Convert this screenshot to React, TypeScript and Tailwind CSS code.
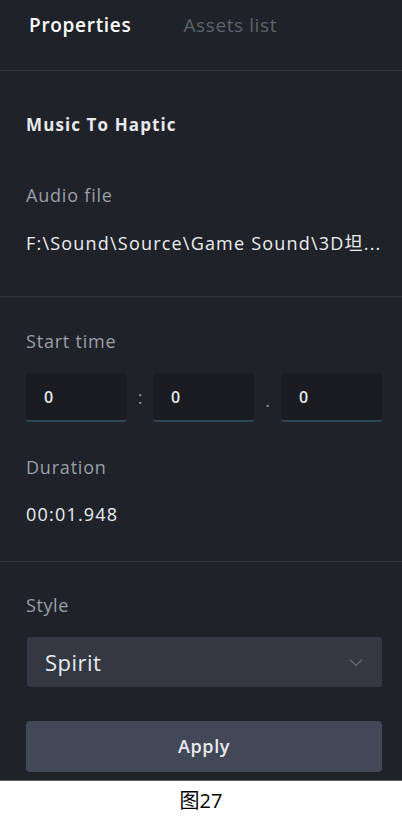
import React from 'react';

const TimeBox: React.FC<{ value: string }> = ({ value }) => (
  <div className="flex-1 h-[49px] bg-[#1a1c21] rounded-[3px] border-b-2 border-[#2e4858] flex items-center pl-[18px] text-[16px] font-semibold text-[#e6e8ec]">
    {value}
  </div>
);

const App: React.FC = () => {
  return (
    <div className="w-[402px] h-[839px] bg-white" style={{ fontFamily: '"Open Sans", "Noto Sans CJK SC", sans-serif' }}>
      <div className="h-[781px] bg-[#1f2229] border-b border-[#5b5f67] flex flex-col">
        <div className="h-[71px] flex items-start pt-[11px] pl-[29px] gap-[52px] border-b border-[#33373f]">
          <span className="text-[19px] font-semibold text-white tracking-[0.7px]">Properties</span>
          <span className="text-[19px] text-[#5d626c] tracking-[0.6px]">Assets list</span>
        </div>

        <div className="pl-[26px] pr-[20px] pt-[42px] h-[226px] border-b border-[#33373f]">
          <div className="text-[17px] font-bold text-[#e8e9ec] leading-[24px] tracking-[1.1px]">Music To Haptic</div>
          <div className="mt-[46px] text-[18px] text-[#9b9fa7] leading-[24px] tracking-[0.8px]">Audio file</div>
          <div className="mt-[24px] text-[18px] text-[#eceef1] leading-[24px] tracking-[1.2px] whitespace-nowrap">
            F:\Sound\Source\Game Sound\3D坦...
          </div>
        </div>

        <div className="pl-[26px] pr-[20px] pt-[32px] h-[265px] border-b border-[#33373f]">
          <div className="text-[18px] text-[#9b9fa7] leading-[24px] tracking-[0.8px]">Start time</div>
          <div className="mt-[20px] flex items-center">
            <TimeBox value="0" />
            <span className="w-[26px] text-center text-[18px] text-[#8d9199]">:</span>
            <TimeBox value="0" />
            <span className="w-[27px] text-center text-[18px] text-[#8d9199] pt-[6px]">.</span>
            <TimeBox value="0" />
          </div>
          <div className="mt-[33px] text-[18px] text-[#9b9fa7] leading-[24px] tracking-[0.8px]">Duration</div>
          <div className="mt-[23px] text-[18px] text-[#eceef1] leading-[24px] tracking-[1.2px]">00:01.948</div>
        </div>

        <div className="pl-[26px] pr-[20px] pt-[31px]">
          <div className="text-[18px] text-[#9b9fa7] leading-[24px] tracking-[0.6px]">Style</div>
          <div className="mt-[20px] ml-[1px] h-[50px] bg-[#343842] rounded-[3px] flex items-center justify-between pl-[18px] pr-[19px]">
            <span className="text-[22px] text-[#e8eaee] tracking-[0.5px]">Spirit</span>
            <svg width="14" height="9" viewBox="0 0 14 9" fill="none">
              <path d="M1 1.5L7 7.5L13 1.5" stroke="#646874" strokeWidth="1.3" />
            </svg>
          </div>
          <button className="mt-[34px] w-full h-[51px] bg-[#424857] rounded-[4px] text-[18px] font-semibold text-[#e8eaee] tracking-[0.6px]">
            Apply
          </button>
        </div>
      </div>
      <div className="text-center text-[20px] text-black mt-[2px] leading-[36px]">图27</div>
    </div>
  );
};

export default App;
